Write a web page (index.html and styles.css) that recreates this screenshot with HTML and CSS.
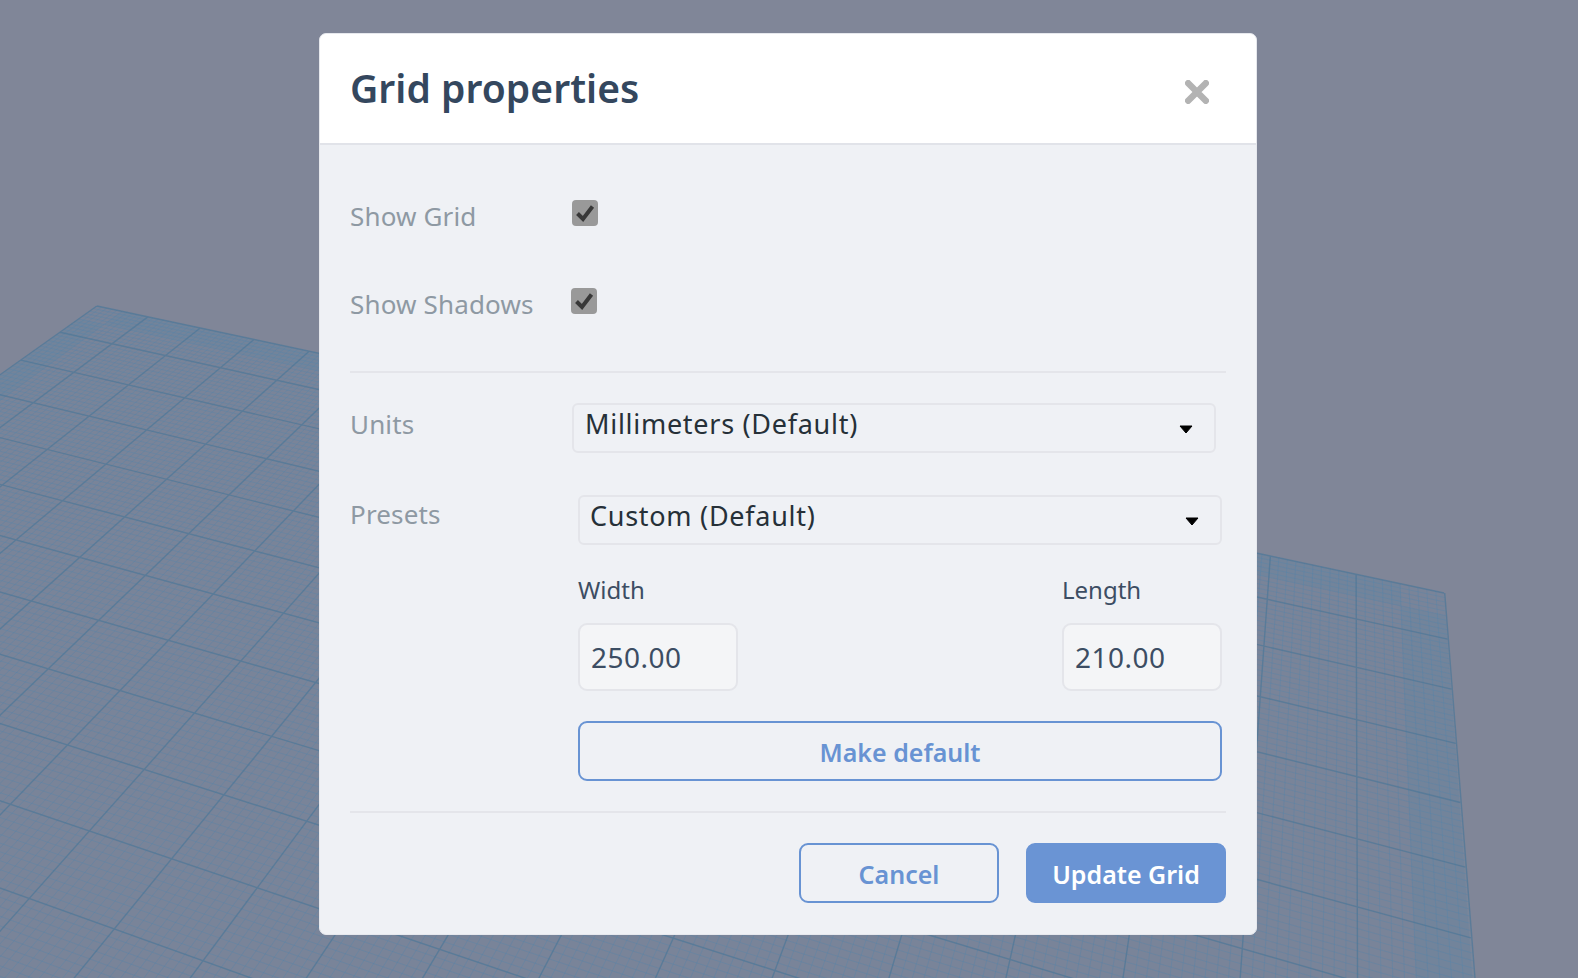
FILE: index.html
```html
<!DOCTYPE html>
<html lang="en">
<head>
<meta charset="utf-8">
<title>Grid properties</title>
<link rel="stylesheet" href="styles.css">
</head>
<body>
<svg class="scene" id="scene" viewBox="0 0 1578 978" xmlns="http://www.w3.org/2000/svg" aria-hidden="true"></svg>
<main class="modal">
  <header class="modal-header">
    <h1 class="modal-title">Grid properties</h1>
    <svg class="close-icon" viewBox="0 0 24 24" xmlns="http://www.w3.org/2000/svg"><path d="M3.2 3.2 20.8 20.8M20.8 3.2 3.2 20.8"/></svg>
  </header>
  <div class="modal-body">
    <div class="check-row">
      <span class="label label-check-a">Show Grid</span>
      <span class="checkbox"><svg viewBox="0 0 26 26" xmlns="http://www.w3.org/2000/svg"><path d="M5.5 13.5 11 19 20.5 6.5"/></svg></span>
    </div>
    <div class="check-row check-row-second">
      <span class="label label-check-b">Show Shadows</span>
      <span class="checkbox"><svg viewBox="0 0 26 26" xmlns="http://www.w3.org/2000/svg"><path d="M5.5 13.5 11 19 20.5 6.5"/></svg></span>
    </div>
    <hr class="divider divider-top">
    <div class="units-row">
      <span class="label label-units">Units</span>
      <div class="select">
        <span class="select-text select-text-units">Millimeters (Default)</span>
        <svg class="arrow" viewBox="0 0 14 9" xmlns="http://www.w3.org/2000/svg"><path d="M1 1h12L7 8z"/></svg>
      </div>
    </div>
    <div class="presets-row">
      <span class="label label-presets">Presets</span>
      <div class="presets-col">
        <div class="select select-tall">
          <span class="select-text">Custom (Default)</span>
          <svg class="arrow" viewBox="0 0 14 9" xmlns="http://www.w3.org/2000/svg"><path d="M1 1h12L7 8z"/></svg>
        </div>
        <div class="dims">
          <label class="dim">Width<input class="dim-input" type="text" value="250.00"></label>
          <label class="dim">Length<input class="dim-input" type="text" value="210.00"></label>
        </div>
        <button class="btn btn-outline btn-wide" type="button">Make default</button>
      </div>
    </div>
    <hr class="divider divider-bottom">
    <footer class="modal-footer">
      <button class="btn btn-outline btn-action" type="button">Cancel</button>
      <button class="btn btn-primary btn-action" type="button">Update Grid</button>
    </footer>
  </div>
</main>
<script src="grid.js"></script>
</body>
</html>
```
FILE: styles.css
```css
* { box-sizing: border-box; }
html, body { margin: 0; height: 100%; }
body {
  background: #808698;
  font-family: "Noto Sans", "Open Sans", sans-serif;
  display: flex;
  justify-content: center;
  align-items: flex-start;
  padding-top: 33px;
  overflow: hidden;
}
.scene { position: absolute; left: 0; top: 0; width: 1578px; height: 978px; filter: blur(0.5px); }
.plane { fill: #798499; }
.band { fill: #4f84ad; fill-opacity: 0.14; }
.minor { fill: none; stroke: #4f84ad; stroke-width: 0.8; stroke-opacity: 0.4; }
.major { fill: none; stroke: #4a7698; stroke-width: 1.4; stroke-opacity: 0.65; }
.modal {
  position: relative;
  width: 938px;
  margin-right: 2px;
  background: #eff1f5;
  border: 1px solid #e6e8ed;
  border-radius: 7px;
  overflow: hidden;
}
.modal-header {
  height: 111px;
  background: #fff;
  border-bottom: 2px solid #e1e3e9;
  padding: 0 47px 0 30px;
  display: flex;
  align-items: center;
  justify-content: space-between;
}
.modal-title { margin: -2px 0 0; font-size: 39px; line-height: 50px; font-weight: 600; color: #34475e; letter-spacing: 0.05px; }
.close-icon { width: 24px; height: 24px; margin-top: 7px; fill: none; stroke: #b3b3b3; stroke-width: 6.5; stroke-linecap: round; }
.modal-body { padding: 55px 30px 31px 30px; }
.label { font-size: 26px; line-height: 32px; color: #8e99a3; flex: none; letter-spacing: 0.15px; }
.check-row { display: flex; height: 32px; }
.check-row-second { margin-top: 56px; }
.label-check-a { width: 222px; }
.label-check-b { width: 221px; }
.checkbox { width: 26px; height: 26px; background: #999; border-radius: 4px; display: block; }
.checkbox svg { display: block; fill: none; stroke: #383838; stroke-width: 4; }
.divider { margin: 0; border: 0; height: 2px; background: #e4e5ea; }
.divider-top { margin-top: 51px; }
.divider-bottom { margin-top: 30px; }
.units-row { display: flex; margin-top: 30px; }
.label-units { width: 222px; line-height: 42px; }
.select {
  width: 644px;
  height: 50px;
  border: 2px solid #e4e5ea;
  border-radius: 6px;
  padding: 1px 21px 0 10px;
  font-size: 27px;
  line-height: 35px;
  color: #263038;
  display: flex;
  justify-content: space-between;
}
.select-text { letter-spacing: 0.72px; }
.select-text-units { margin-left: 1px; }
.arrow { width: 14px; height: 9px; margin-top: 19px; fill: #000; stroke: #000; stroke-width: 1; stroke-linejoin: round; }
.presets-row { display: flex; margin-top: 42px; }
.label-presets { width: 228px; line-height: 38px; }
.presets-col { width: 644px; }
.dims { display: flex; justify-content: space-between; margin-top: 30px; }
.dim { display: flex; flex-direction: column; width: 160px; font-size: 24px; line-height: 30px; color: #3c4d63; }
.dim-input {
  width: 160px;
  height: 68px;
  margin-top: 18px;
  border: 2px solid #e4e5ea;
  border-radius: 9px;
  background: #f4f5f7;
  padding: 0 11px;
  font: 400 28px "Noto Sans", "Open Sans", sans-serif;
  letter-spacing: 0.5px;
  color: #3c4d63;
  outline: none;
}
.btn {
  border-radius: 9px;
  font: 600 25px/1 "Noto Sans", "Open Sans", sans-serif;
  padding: 2px 0 0;
}
.btn-outline { background: transparent; border: 2px solid #6893d3; color: #6893d3; }
.btn-primary { background: #6a94d4; border: 2px solid #6a94d4; color: #fff; }
.btn-wide { display: block; width: 100%; height: 60px; margin-top: 30px; }
.btn-action { width: 200px; height: 60px; }
.modal-footer { display: flex; justify-content: flex-end; gap: 27px; margin-top: 30px; }
```
FILE: grid.js
```js
(function () {
  var svg = document.getElementById('scene');
  var V1 = [1352, -586];
  function top(u) {
    var x = -3900 + 1 / (2.502e-4 - 0.03155e-4 * u);
    return [x, 306 + 0.213 * (x - 97)];
  }
  function bottom(u) {
    var p = top(u), yEnd = 1000;
    var k = (yEnd - V1[1]) / (p[1] - V1[1]);
    return [V1[0] + (p[0] - V1[0]) * k, yEnd];
  }
  function left(v) {
    var x = 1352 - 1 / (7.968e-4 - 0.228e-4 * v);
    return [x, 306 + (97 - x) * 0.711];
  }
  function right(v) {
    var y = -586 + 1 / (8.482e-4 - 0.32e-4 * v);
    return [1444 + (y - 593) * 0.0779, y];
  }
  function seg(a, b) {
    return 'M' + a[0].toFixed(2) + ' ' + a[1].toFixed(2) + 'L' + b[0].toFixed(2) + ' ' + b[1].toFixed(2);
  }
  function quad(a, b, c, d) {
    return seg(a, b) + 'L' + c[0].toFixed(2) + ' ' + c[1].toFixed(2) + 'L' + d[0].toFixed(2) + ' ' + d[1].toFixed(2) + 'Z';
  }
  function addPath(d, cls) {
    var p = document.createElementNS('http://www.w3.org/2000/svg', 'path');
    p.setAttribute('d', d);
    p.setAttribute('class', cls);
    svg.appendChild(p);
  }
  addPath('M97 306L1444 593L1474 1000L-600 1000L-600 801Z', 'plane');
  addPath(
    quad(left(0), right(0), right(0.5), left(0.5)) +
    quad(top(0), bottom(0), bottom(0.5), top(0.5)) +
    quad(top(19.5), bottom(19.5), bottom(20), top(20)),
    'band'
  );
  var minor = '', major = '', i;
  for (i = 0; i <= 200; i++) {
    var u = i / 10;
    if (i % 10 === 0) major += seg(top(u), bottom(u)); else minor += seg(top(u), bottom(u));
  }
  for (i = 0; i <= 250; i++) {
    var v = i / 10;
    if (i % 10 === 0) major += seg(left(v), right(v)); else minor += seg(left(v), right(v));
  }
  addPath(minor, 'minor');
  addPath(major, 'major');
})();
```
